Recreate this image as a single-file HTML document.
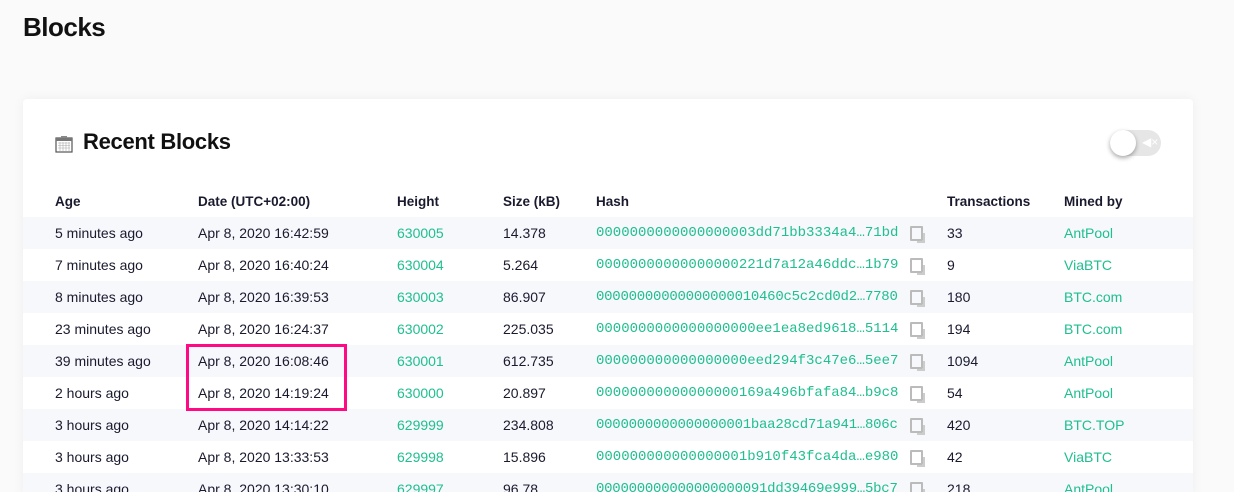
<!DOCTYPE html>
<html style="overflow:hidden;height:492px"><head><meta charset="utf-8"><style>
body{margin:0;width:1234px;height:492px;overflow:hidden;background:#fafafa;font-family:"Liberation Sans",sans-serif;color:#1a1a2e;position:relative}
h1{position:absolute;left:23px;top:12px;margin:0;font-size:26px;font-weight:bold;letter-spacing:-0.5px;color:#111}
.card{position:absolute;left:23px;top:99px;width:1170px;height:400px;background:#fff;box-shadow:0 0 12px rgba(0,0,0,0.05);border-radius:4px}
.title{position:absolute;top:129px;font-size:22px;font-weight:bold;color:#111;letter-spacing:-0.3px}
.row,.hdr{position:absolute;left:23px;width:1170px;height:32px;font-size:14px}
.row.s{background:#f6f8fc}
.c{position:absolute;top:0;line-height:32px;white-space:nowrap}
.hdr .c{font-weight:bold;font-size:13.5px}
.g{color:#1fbf8f}
.m{font-family:"Liberation Mono",monospace;font-size:14px}
.l{letter-spacing:-0.25px}
.cp{position:absolute;left:887px;top:9px;width:9px;height:11px;border:2px solid #bbb;border-radius:1px}
.cp:after{content:"";position:absolute;left:5px;top:5px;width:6px;height:8px;border-right:2px solid #ccc;border-bottom:2px solid #ccc}
</style></head><body>
<h1>Blocks</h1>
<div class="card"></div>
<svg style="position:absolute;left:55px;top:135px" width="18" height="18" viewBox="0 0 18 18"><rect x="1" y="3" width="16" height="14" fill="#fff" stroke="#555" stroke-width="1.2"/><rect x="1" y="3" width="16" height="3" fill="#777"/><path d="M3 8h12M3 10.5h12M3 13h12M5 7v9M8 7v9M11 7v9M14 7v9" stroke="#aaa" stroke-width="0.6"/><rect x="6" y="1" width="6" height="2" fill="#888"/></svg>
<div class="title" style="left:83px">Recent Blocks</div>
<div style="position:absolute;left:1110px;top:130px;width:51px;height:26px;border-radius:13px;background:#e6e6e6"></div>
<div style="position:absolute;left:1110px;top:130px;width:26px;height:26px;border-radius:13px;background:#fff;box-shadow:0 2px 5px rgba(0,0,0,.35)"></div>
<div style="position:absolute;left:1142px;top:135px;font-size:12px;color:#fff">◀×</div>
<div class="hdr" style="top:186px">
<div class="c" style="left:32px">Age</div><div class="c" style="left:175px">Date (UTC+02:00)</div><div class="c" style="left:374px">Height</div><div class="c" style="left:480px">Size (kB)</div><div class="c" style="left:573px">Hash</div><div class="c" style="left:924px">Transactions</div><div class="c" style="left:1041px">Mined by</div></div>
<div class="row s" style="top:217px"><div class="c" style="left:32px">5 minutes ago</div><div class="c" style="left:175px">Apr 8, 2020 16:42:59</div><div class="c g" style="left:374px">630005</div><div class="c" style="left:480px">14.378</div><div class="c g m" style="left:573px">0000000000000000003dd71bb3334a4…71bd</div><div class="cp"></div><div class="c" style="left:924px">33</div><div class="c g" style="left:1041px">AntPool</div></div>
<div class="row" style="top:249px"><div class="c" style="left:32px">7 minutes ago</div><div class="c" style="left:175px">Apr 8, 2020 16:40:24</div><div class="c g" style="left:374px">630004</div><div class="c" style="left:480px">5.264</div><div class="c g m" style="left:573px">00000000000000000221d7a12a46ddc…1b79</div><div class="cp"></div><div class="c" style="left:924px">9</div><div class="c g" style="left:1041px">ViaBTC</div></div>
<div class="row s" style="top:281px"><div class="c" style="left:32px">8 minutes ago</div><div class="c" style="left:175px">Apr 8, 2020 16:39:53</div><div class="c g" style="left:374px">630003</div><div class="c" style="left:480px">86.907</div><div class="c g m l" style="left:573px">00000000000000000010460c5c2cd0d2…7780</div><div class="cp"></div><div class="c" style="left:924px">180</div><div class="c g" style="left:1041px">BTC.com</div></div>
<div class="row" style="top:313px"><div class="c" style="left:32px">23 minutes ago</div><div class="c" style="left:175px">Apr 8, 2020 16:24:37</div><div class="c g" style="left:374px">630002</div><div class="c" style="left:480px">225.035</div><div class="c g m" style="left:573px">0000000000000000000ee1ea8ed9618…5114</div><div class="cp"></div><div class="c" style="left:924px">194</div><div class="c g" style="left:1041px">BTC.com</div></div>
<div class="row s" style="top:345px"><div class="c" style="left:32px">39 minutes ago</div><div class="c" style="left:175px">Apr 8, 2020 16:08:46</div><div class="c g" style="left:374px">630001</div><div class="c" style="left:480px">612.735</div><div class="c g m" style="left:573px">000000000000000000eed294f3c47e6…5ee7</div><div class="cp"></div><div class="c" style="left:924px">1094</div><div class="c g" style="left:1041px">AntPool</div></div>
<div class="row" style="top:377px"><div class="c" style="left:32px">2 hours ago</div><div class="c" style="left:175px">Apr 8, 2020 14:19:24</div><div class="c g" style="left:374px">630000</div><div class="c" style="left:480px">20.897</div><div class="c g m" style="left:573px">00000000000000000169a496bfafa84…b9c8</div><div class="cp"></div><div class="c" style="left:924px">54</div><div class="c g" style="left:1041px">AntPool</div></div>
<div class="row s" style="top:409px"><div class="c" style="left:32px">3 hours ago</div><div class="c" style="left:175px">Apr 8, 2020 14:14:22</div><div class="c g" style="left:374px">629999</div><div class="c" style="left:480px">234.808</div><div class="c g m l" style="left:573px">0000000000000000001baa28cd71a941…806c</div><div class="cp"></div><div class="c" style="left:924px">420</div><div class="c g" style="left:1041px">BTC.TOP</div></div>
<div class="row" style="top:441px"><div class="c" style="left:32px">3 hours ago</div><div class="c" style="left:175px">Apr 8, 2020 13:33:53</div><div class="c g" style="left:374px">629998</div><div class="c" style="left:480px">15.896</div><div class="c g m" style="left:573px">000000000000000001b910f43fca4da…e980</div><div class="cp"></div><div class="c" style="left:924px">42</div><div class="c g" style="left:1041px">ViaBTC</div></div>
<div class="row s" style="top:473px"><div class="c" style="left:32px">3 hours ago</div><div class="c" style="left:175px">Apr 8, 2020 13:30:10</div><div class="c g" style="left:374px">629997</div><div class="c" style="left:480px">96.78</div><div class="c g m l" style="left:573px">000000000000000000091dd39469e999…5bc7</div><div class="cp"></div><div class="c" style="left:924px">218</div><div class="c g" style="left:1041px">AntPool</div></div>
<div style="position:absolute;left:186px;top:344px;width:155px;height:61px;border:3px solid #ff0a84"></div>
</body></html>
